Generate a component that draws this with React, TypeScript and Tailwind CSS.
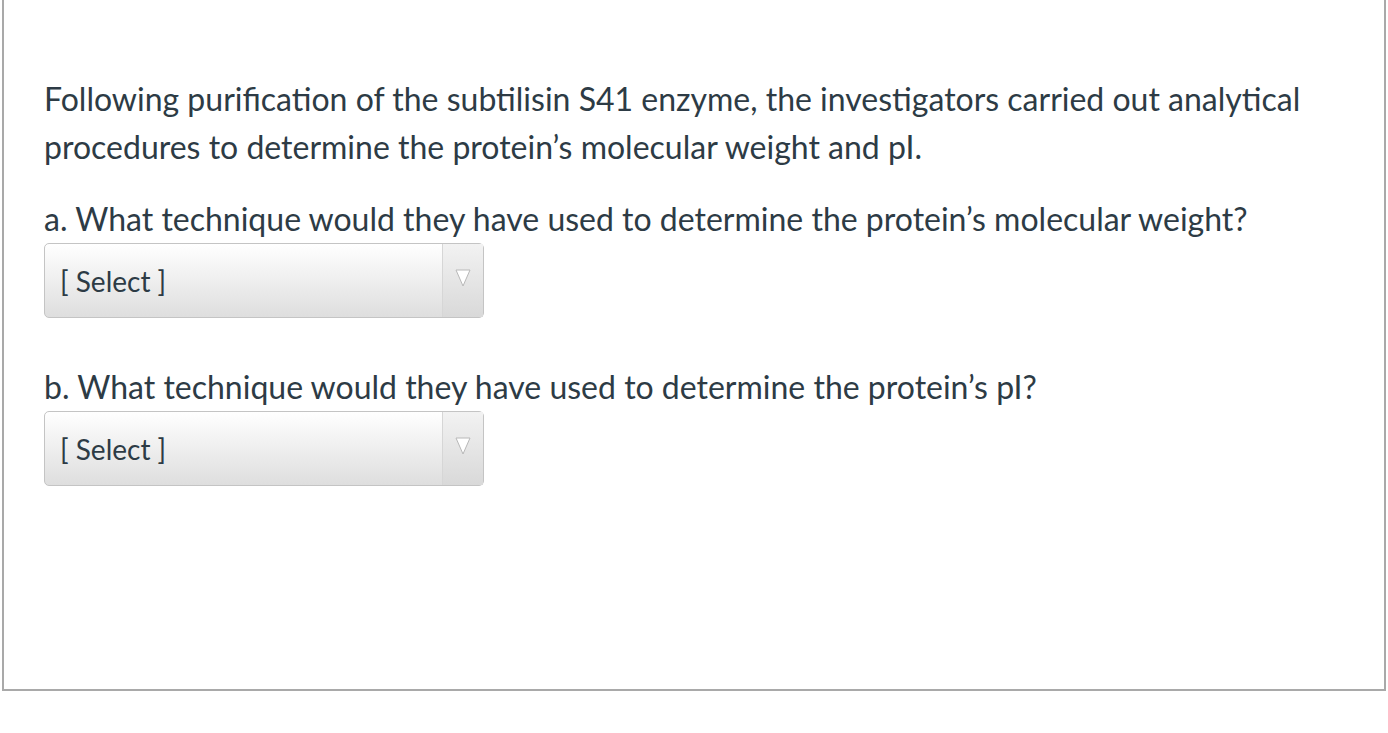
import React from "react";

function SelectBox() {
  return (
    <div className="flex h-[75px] w-[440px] items-stretch rounded-[5px] border border-[#c4c4c4] bg-gradient-to-b from-[#ffffff] to-[#dedede]">
      <div className="flex flex-1 items-center pl-[15px] text-[28px] text-[#2d3b45]">[ Select ]</div>
      <div className="flex w-[41px] items-start justify-center border-l border-[#d6d6d6] bg-gradient-to-b from-[#f2f2f2] to-[#d9d9d9] pt-[25px]">
        <svg width="16" height="18" viewBox="0 0 16 18">
          <path d="M1 1 L15 1 L8 17 Z" fill="#ffffff" stroke="#b8b8b8" strokeWidth="1" strokeLinejoin="round" />
        </svg>
      </div>
    </div>
  );
}

export default function App() {
  return (
    <div className="h-[733px] w-[1388px] bg-white" style={{ fontFamily: "Lato, 'Open Sans', sans-serif" }}>
      <div className="ml-[2px] h-[691px] w-[1384px] border-x-2 border-b-2 border-[#a9a9a9] px-[40px] pt-[75px] text-[32px] leading-[48px] text-[#2d3b45]">
        <p>
          Following purification of the subtilisin S41 enzyme, the investigators carried out analytical procedures to
          determine the protein’s molecular weight and pI.
        </p>
        <p className="mt-[24px]">a. What technique would they have used to determine the protein’s molecular weight?</p>
        <div className="mt-0">
          <SelectBox />
        </div>
        <p className="mt-[45px]">b. What technique would they have used to determine the protein’s pI?</p>
        <div className="mt-0">
          <SelectBox />
        </div>
      </div>
    </div>
  );
}
